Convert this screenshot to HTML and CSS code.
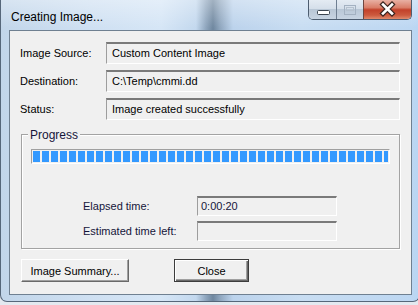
FILE: index.html
```html
<!DOCTYPE html>
<html lang="en">
<head>
  <meta charset="UTF-8">
  <title>Creating Image...</title>
  <link rel="stylesheet" href="styles.css">
</head>
<body>
  <div class="window">
    <div class="titlebar">
      <span class="title">Creating Image...</span>
      <div class="caption-buttons">
        <div class="cap-btn cap-min">
          <svg width="27" height="19" viewBox="0 0 27 19">
            <rect x="8.5" y="10.5" width="12" height="4" rx="1" fill="#fff" stroke="#3b4550"/>
          </svg>
        </div>
        <div class="cap-btn cap-max">
          <svg width="26" height="19" viewBox="0 0 26 19">
            <rect x="7.5" y="5.5" width="11" height="9" fill="none" stroke="#a3b1c1"/>
            <rect x="9.5" y="7.5" width="7" height="3" fill="none" stroke="#b5c1ce"/>
          </svg>
        </div>
        <div class="cap-btn cap-close">
          <svg width="47" height="19" viewBox="0 0 47 19">
            <path d="M19 4.5 L28 13.5 M28 4.5 L19 13.5" stroke="#3a2520" stroke-width="5" stroke-linecap="square"/>
            <path d="M19 4.5 L28 13.5 M28 4.5 L19 13.5" stroke="#fff" stroke-width="2.6" stroke-linecap="square"/>
          </svg>
        </div>
      </div>
    </div>

    <div class="client">
      <div class="info">
        <label>Image Source:</label>
        <div class="field">Custom Content Image</div>
        <label>Destination:</label>
        <div class="field">C:\Temp\cmmi.dd</div>
        <label>Status:</label>
        <div class="field">Image created successfully</div>
      </div>

      <div class="group">
        <span class="group-title">Progress</span>
        <div class="progress"><div class="progress-fill"></div></div>
        <div class="times">
          <label>Elapsed time:</label>
          <div class="field small">0:00:20</div>
          <label>Estimated time left:</label>
          <div class="field small"></div>
        </div>
      </div>

      <div class="buttons">
        <button class="btn summary">Image Summary...</button>
        <button class="btn default">Close</button>
      </div>
    </div>
  </div>
</body>
</html>
```

FILE: styles.css
```css
body {
  margin: 0;
  width: 418px;
  height: 305px;
  overflow: hidden;
  background: #e3e9f0;
  font-family: "Liberation Sans", Arial, sans-serif;
  font-size: 11px;
  color: #000;
}
.window {
  width: 420px;
  height: 302px;
  box-sizing: border-box;
  padding: 0 7px 0 8px;
  border: 1px solid #56677a;
  border-top: none;
  border-radius: 0 0 7px 7px;
  background:
    linear-gradient(180deg, rgba(255,255,255,0.35), rgba(255,255,255,0) 28px),
    linear-gradient(90deg, #c2d6ea 0, #cfe0f2 90px, #d6e6f6 160px, #c3d8ee 195px, #8ea5bd 205px, #6f879f 212px, #8fa6be 219px, #bcd3ec 232px, #c8ddf2 300px, #bdd7f2 410px, #b7d5f4 420px);
}
.titlebar {
  height: 30px;
  display: flex;
  justify-content: space-between;
  align-items: flex-start;
}
.title {
  margin: 10px 0 0 2px;
  font-size: 12px;
  color: #000;
}
.caption-buttons {
  display: flex;
  height: 19px;
  border: 1px solid #4d5d70;
  border-top: none;
  border-radius: 0 0 5px 5px;
  overflow: hidden;
}
.cap-btn {
  height: 19px;
}
.cap-btn svg {
  display: block;
}
.cap-min {
  width: 27px;
  border-right: 1px solid #6f7f92;
  background: linear-gradient(180deg, #e4ebf3 0, #d5dfea 45%, #b9c7d6 50%, #c7d4e2 100%);
}
.cap-max {
  width: 26px;
  border-right: 1px solid #6f4640;
  background: linear-gradient(180deg, #e4ebf3 0, #d5dfea 45%, #b9c7d6 50%, #c7d4e2 100%);
}
.cap-close {
  width: 47px;
  background: linear-gradient(180deg, #e8b0a3 0, #d97d68 40%, #c2412a 52%, #cc5a3e 80%, #e08a6c 100%);
}
.client {
  height: 265px;
  box-sizing: border-box;
  border: 1px solid #6f8091;
  background: #f0f0f0;
  padding: 11px 11px 0 10px;
}
.info {
  display: grid;
  grid-template-columns: 86px 1fr;
  grid-auto-rows: 22px;
  row-gap: 6px;
  align-items: center;
}
.field {
  height: 22px;
  box-sizing: border-box;
  border-top: 2px solid #7a7a7a;
  border-left: 1px solid #9d9d9d;
  border-right: 1px solid #fff;
  border-bottom: 1px solid #fff;
  padding-left: 5px;
  line-height: 18px;
  white-space: nowrap;
}
.field.small {
  height: 20px;
  line-height: 17px;
  padding-left: 3px;
}
.group {
  position: relative;
  margin: 14px 0 0 1px;
  height: 115px;
  box-sizing: border-box;
  border: 1px solid #a3a3a3;
  box-shadow: inset 1px 1px 0 #fff, 1px 1px 0 #fff;
  padding: 14px 9px 0 9px;
}
.group-title {
  position: absolute;
  top: -7px;
  left: 6px;
  padding: 0 2px;
  background: #f0f0f0;
  font-size: 12px;
  color: #15153a;
}
.progress {
  height: 15px;
  box-sizing: border-box;
  border-top: 1px solid #a0a0a0;
  border-left: 1px solid #a0a0a0;
  border-right: 1px solid #fff;
  border-bottom: 1px solid #fff;
  padding: 1px;
}
.progress-fill {
  height: 100%;
  background: repeating-linear-gradient(90deg, #3399ff 0, #3399ff 7px, transparent 7px, transparent 9px);
}
.times {
  display: grid;
  grid-template-columns: 114px 140px;
  grid-auto-rows: 20px;
  row-gap: 5px;
  align-items: center;
  margin: 32px 0 0 52px;
  color: #15153a;
}
.times .field {
  color: #15153a;
}
.buttons {
  display: flex;
  gap: 45px;
  margin: 10px 0 0 1px;
}
.btn {
  height: 23px;
  padding: 0;
  font-family: "Liberation Sans", Arial, sans-serif;
  font-size: 11px;
  color: #000;
  background: #f0f0f0;
  border: 1px solid;
  border-color: #fff #696969 #696969 #fff;
  box-shadow: inset -1px -1px 0 #a0a0a0;
}
.summary {
  width: 108px;
}
.default {
  width: 75px;
  border: 1px solid #3c3c3c;
  box-shadow: inset 1px 1px 0 #fff, inset -1px -1px 0 #696969, inset -2px -2px 0 #a0a0a0;
}
```
